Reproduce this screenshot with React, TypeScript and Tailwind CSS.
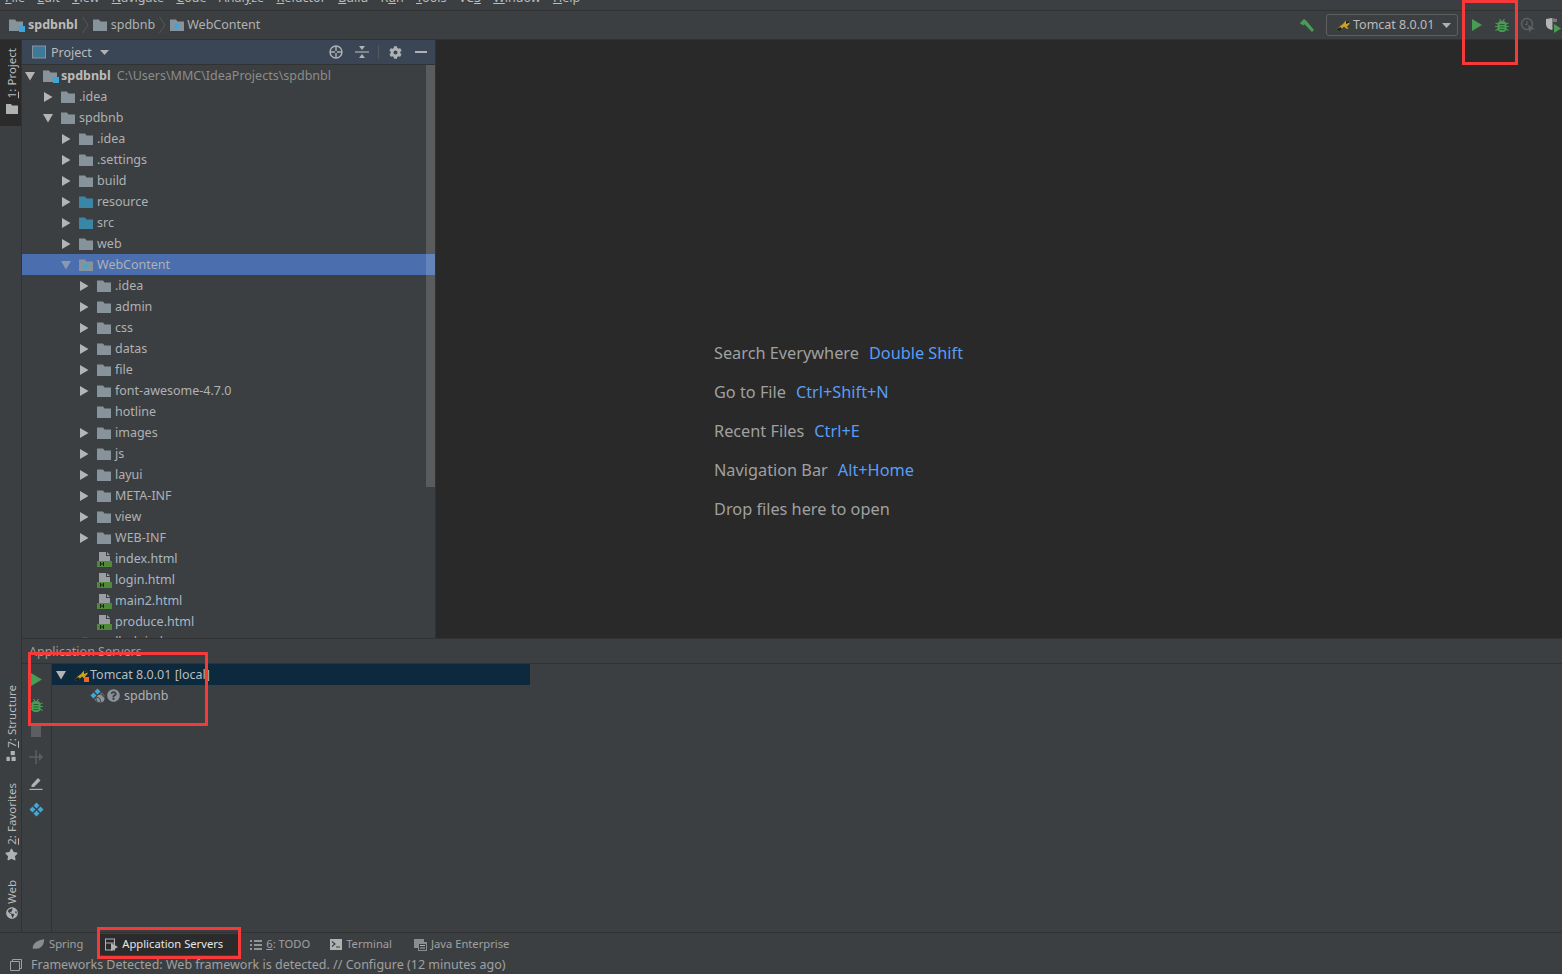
import React from "react";
import { FaCog, FaStar, FaGlobeAmericas, FaQuestionCircle } from "react-icons/fa";

const Folder = ({ color = "#87939a", dot = false, mod = false }: { color?: string; dot?: boolean; mod?: boolean }) => (
  <svg width="16" height="14" viewBox="0 0 16 14" className="shrink-0">
    <path d="M0 1.500h6l1.500 2H14v9.500H0z" fill={color} />
    {dot && <circle cx="6.500" cy="8.500" r="2.400" fill="#3aa7dc" />}
    {mod && <rect x="10" y="8" width="6" height="6" fill="#3aa7dc" />}
  </svg>
);

const Arrow = ({ open, className = "" }: { open?: boolean; className?: string }) => (
  <svg width="10" height="10" viewBox="0 0 10 10" className={className}>
    {open ? <polygon points="0,1 10,1 5,9.500" fill="#b4b4b4" /> : <polygon points="1,0 9.500,5 1,10" fill="#b4b4b4" />}
  </svg>
);

const Html = () => (
  <svg width="16" height="16" viewBox="0 0 16 16" className="shrink-0">
    <path d="M2 1h7v4h4v5H2z" fill="#9a9ea2" />
    <path d="M10 1l3 3h-3z" fill="#9a9ea2" />
    <rect x="0" y="10" width="15" height="6" fill="#4f8a3a" />
    <path d="M3.500 11v4M6.500 11v4M3.500 13h3" stroke="#16280f" strokeWidth="1" />
  </svg>
);

const Play = ({ size = 12, color = "#499c54" }: { size?: number; color?: string }) => (
  <svg width={size} height={size} viewBox="0 0 12 12"><polygon points="1,0 11,6 1,12" fill={color} /></svg>
);

const Bug = ({ color = "#499c54" }: { color?: string }) => (
  <svg width="14" height="14" viewBox="0 0 14 14">
    <path d="M4.500 1l1.500 2M9.500 1L8 3M0.500 5l2.500 1M13.500 5L11 6M0 8.500h3M14 8.500h-3M0.500 12.500L3 11M13.500 12.500L11 11" stroke={color} strokeWidth="1.200" />
    <rect x="2.500" y="3" width="9" height="11" rx="4" fill={color} />
    <path d="M4.500 6.500h5M4.500 9h5M4.500 11.500h5" stroke="#2f5a35" strokeWidth="1" />
  </svg>
);

const Tomcat = ({ badge = false }: { badge?: boolean }) => (
  <svg width="16" height="14" viewBox="0 0 16 14" className="shrink-0">
    <path d="M0.500 11.500c2-1 3.500-4 6-5L10 2.500l1 1 2-1 .5 3.500-2.500 2.500 1.500 2.500-2.500-.500L8 8.500 5 11.500 2 12.500z" fill="#c9a227" />
    <path d="M10 2.500l1 1 2-1 .3 2L10 6zM0.500 11.500L4.500 9 6 11 3 13z" fill="#1e1e1e" />
    {badge && <rect x="10" y="9" width="5" height="5" fill="#f26522" />}
  </svg>
);

const Deploy = ({ globe = false }: { globe?: boolean }) => (
  <svg width="15" height="15" viewBox="0 0 15 15" className="shrink-0">
    <path d="M7.500 0.500L10.500 3.500 7.500 6.500 4.500 3.500zM3.500 4.500L6.500 7.500 3.500 10.500 0.500 7.500zM11.500 4.500L14.500 7.500 11.500 10.500 8.500 7.500zM7.500 8.500L10.500 11.500 7.500 14.500 4.500 11.500z" fill="#40a9d9" />
    {globe && <circle cx="10.500" cy="10.500" r="4.500" fill="#8a9299" stroke="#3c3f41" />}
    {globe && <path d="M7 9.500c2 0 3 1 3 2s1 2 1 3M12 6.500c0 2 2 2 2.500 3" stroke="#3c3f41" fill="none" />}
  </svg>
);

type Node = { d: number; t: string; a?: "o" | "c"; k?: "f" | "b" | "w" | "h" | "m"; sel?: boolean; extra?: string };

const rows: Node[] = [
  { d: 0, t: "spdbnbl", a: "o", k: "m", extra: "C:\\Users\\MMC\\IdeaProjects\\spdbnbl" },
  { d: 1, t: ".idea", a: "c" },
  { d: 1, t: "spdbnb", a: "o" },
  { d: 2, t: ".idea", a: "c" },
  { d: 2, t: ".settings", a: "c" },
  { d: 2, t: "build", a: "c" },
  { d: 2, t: "resource", a: "c", k: "b" },
  { d: 2, t: "src", a: "c", k: "b" },
  { d: 2, t: "web", a: "c" },
  { d: 2, t: "WebContent", a: "o", k: "w", sel: true },
  { d: 3, t: ".idea", a: "c" },
  { d: 3, t: "admin", a: "c" },
  { d: 3, t: "css", a: "c" },
  { d: 3, t: "datas", a: "c" },
  { d: 3, t: "file", a: "c" },
  { d: 3, t: "font-awesome-4.7.0", a: "c" },
  { d: 3, t: "hotline" },
  { d: 3, t: "images", a: "c" },
  { d: 3, t: "js", a: "c" },
  { d: 3, t: "layui", a: "c" },
  { d: 3, t: "META-INF", a: "c" },
  { d: 3, t: "view", a: "c" },
  { d: 3, t: "WEB-INF", a: "c" },
  { d: 3, t: "index.html", k: "h" },
  { d: 3, t: "login.html", k: "h" },
  { d: 3, t: "main2.html", k: "h" },
  { d: 3, t: "produce.html", k: "h" },
];

const Row = ({ n }: { n: Node }) => (
  <div
    className={`h-[21px] flex items-center shrink-0 ${n.sel ? "bg-[#4b6eaf]" : ""}`}
    style={{ paddingLeft: 3 + n.d * 18 }}
  >
    <span className="w-[18px] shrink-0 flex justify-start">
      {n.a && <Arrow open={n.a === "o"} className={n.sel ? "opacity-60" : ""} />}
    </span>
    {n.k === "h" ? (
      <Html />
    ) : (
      <Folder color={n.k === "b" ? "#3a86a6" : "#87939a"} dot={n.k === "w"} mod={n.k === "m"} />
    )}
    <span
      className={`ml-[2px] pt-[2px] ${n.d === 0 ? "font-bold text-[#bbbbbb]" : ""} ${n.k === "h" ? "text-[#a9b7c6]" : n.k === "m" ? "" : "text-[#afb1b3]"} ${n.sel ? "text-[#a9b7c6]" : ""}`}
    >
      {n.t}
    </span>
    {n.extra && <span className="ml-[6px] pt-[2px] text-[#8c8c8c]">{n.extra}</span>}
  </div>
);

const Hint = ({ a, b }: { a: string; b?: string }) => (
  <div className="h-[39px] flex items-center gap-[10px] text-[16.300px] text-[#a0a0a0]">
    <span>{a}</span>
    {b && <span className="text-[#589df6]">{b}</span>}
  </div>
);

const VTab = ({ label, u, icon, active, className = "" }: { label: string; u: string; icon: React.ReactNode; active?: boolean; className?: string }) => (
  <div className={`w-[21px] pl-[2px] flex flex-col-reverse items-center text-[11.500px] text-[#bbbbbb] ${active ? "bg-[#2b2b2b] h-[86px] pb-[12px] gap-[6px]" : "gap-[3px]"} ${className}`}>
    {icon}
    <span className="[writing-mode:vertical-rl] rotate-180 leading-[19px] whitespace-nowrap">
      <span className="underline">{u}</span>
      {label}
    </span>
  </div>
);

const BottomTab = ({ icon, children, active, className = "px-[8px]" }: { icon: React.ReactNode; children: React.ReactNode; active?: boolean; className?: string }) => (
  <div className={`h-full flex items-center gap-[4px] text-[11.200px] ${active ? "bg-[#2b2b2b] text-[#e6e6e6]" : "text-[#a0a0a0]"} ${className}`}>
    {icon}
    <span>{children}</span>
  </div>
);

const menu: [string, string, string][] = [
  ["", "F", "ile"], ["", "E", "dit"], ["", "V", "iew"], ["", "N", "avigate"], ["", "C", "ode"], ["Anal", "y", "ze"],
  ["", "R", "efactor"], ["", "B", "uild"], ["R", "u", "n"], ["", "T", "ools"], ["VC", "S", ""], ["", "W", "indow"], ["", "H", "elp"],
];

const Chevron = () => (
  <svg width="7" height="18" viewBox="0 0 7 18" className="mx-[4px] shrink-0">
    <path d="M0.500 1l5.500 8-5.500 8" fill="none" stroke="#55585b" />
  </svg>
);

export default function App() {
  return (
    <div
      className="relative w-[1562px] h-[974px] overflow-hidden bg-[#3c3f41] text-[12.500px] text-[#bbbbbb] flex flex-col"
      style={{ fontFamily: '"Noto Sans", sans-serif' }}
    >
      {/* menu */}
      <div className="h-[11px] shrink-0 overflow-hidden border-b border-[#323232] flex items-end pb-[4px] pl-[5px] gap-[12.300px] text-[#bbbbbb]">
        {menu.map(([a, u, b]) => (
          <span key={a + u + b} className="leading-[16px] whitespace-nowrap">
            {a}
            <span className="underline">{u}</span>
            {b}
          </span>
        ))}
      </div>
      {/* nav */}
      <div className="h-[29px] shrink-0 border-b border-[#323232] flex items-center pl-[9px]">
        <Folder mod />
        <span className="ml-[3px] font-bold text-[#bbbbbb]">spdbnbl</span>
        <Chevron />
        <Folder />
        <span className="ml-[2px] text-[#afb1b3]">spdbnb</span>
        <Chevron />
        <Folder dot />
        <span className="ml-[1px] text-[#afb1b3]">WebContent</span>
        <div className="ml-auto flex items-center">
          <svg width="16" height="16" viewBox="0 0 16 16">
            <path d="M1 6l4-4 2 1.500 1 1L15 13l-2 2-7.500-7.800L4 8.500 3 7.500 1.700 7z" fill="#499c54" />
          </svg>
          <div className="ml-[11px] w-[132px] h-[22px] rounded-[3px] border border-[#5e6060] flex items-center pl-[9px] pr-[6px] text-[#bbbbbb]">
            <Tomcat />
            <span className="ml-[1px]">Tomcat 8.0.01</span>
            <svg width="9" height="5" viewBox="0 0 9 5" className="ml-auto"><polygon points="0,0 9,0 4.500,5" fill="#afb1b3" /></svg>
          </div>
          <div className="ml-[13px]"><Play /></div>
          <div className="ml-[12px]"><Bug /></div>
          <svg width="16" height="16" viewBox="0 0 16 16" className="ml-[11px]">
            <circle cx="7" cy="7" r="5.500" fill="none" stroke="#5e6163" strokeWidth="1.400" />
            <path d="M7 4v3.500h-2" fill="none" stroke="#5e6163" strokeWidth="1.200" />
            <polygon points="8,8 15,12 11,13 9.500,16" fill="#5e6163" />
          </svg>
          <svg width="16" height="16" viewBox="0 0 16 16" className="ml-[9px] mr-[1px]">
            <path d="M1 2l6-1v12l-3-1C2 11 1 9 1 7z" fill="#b5b5b5" />
            <path d="M7 1l5 1v3H8v7.500L7 13z" fill="#777" />
            <polygon points="9,7 16,11.500 9,16" fill="#499c54" />
          </svg>
        </div>
      </div>

      <div className="flex-1 min-h-0 flex">
        {/* left stripe */}
        <div className="w-[22px] shrink-0 border-r border-[#323232] flex flex-col">
          <VTab
            active
            u="1"
            label=": Project"
            icon={<svg width="12" height="10" viewBox="0 0 12 10" className="shrink-0"><path d="M0 0h5l1 1.500h6V10H0z" fill="#afb1b3" /></svg>}
          />
          <VTab
            className="mt-[559px]"
            u="7"
            label=": Structure"
            icon={<svg width="11" height="10" viewBox="0 0 12 12" className="shrink-0"><rect x="5" y="0" width="5" height="5" fill="#afb1b3" /><rect x="0" y="7" width="4" height="5" fill="#afb1b3" /><rect x="6" y="7" width="5" height="5" fill="#afb1b3" /></svg>}
          />
          <VTab
            className="mt-[22px]"
            u="2"
            label=": Favorites"
            icon={<FaStar size={13} color="#afb1b3" className="shrink-0" />}
          />
          <VTab
            className="mt-[19px]"
            u=""
            label="Web"
            icon={<FaGlobeAmericas size={12} color="#afb1b3" className="shrink-0" />}
          />
        </div>

        <div className="flex-1 min-w-0 flex flex-col">
          <div className="h-[599px] shrink-0 flex border-b border-[#323232]">
            {/* project */}
            <div className="w-[414px] shrink-0 flex flex-col border-r border-[#323232]">
              <div className="h-[25px] shrink-0 bg-[#3a4656] border-b border-[#323232] flex items-center pl-[10px] pr-[8px]">
                <svg width="14" height="14" viewBox="0 0 14 14"><rect x="0.500" y="1" width="13" height="12" fill="#3d7a9a" stroke="#8a9299" /></svg>
                <span className="ml-[5px] pt-[2px] text-[#bbbbbb]">Project</span>
                <svg width="9" height="5" viewBox="0 0 9 5" className="ml-[8px]"><polygon points="0,0 9,0 4.500,5" fill="#afb1b3" /></svg>
                <svg width="14" height="14" viewBox="0 0 14 14" className="ml-auto">
                  <circle cx="7" cy="7" r="6" fill="none" stroke="#afb1b3" strokeWidth="1.400" />
                  <path d="M7 1v5M7 8v5M1 7h5M8 7h5" stroke="#afb1b3" strokeWidth="1.400" />
                </svg>
                <svg width="14" height="14" viewBox="0 0 14 14" className="ml-[12px]">
                  <path d="M0 7h14" stroke="#afb1b3" strokeWidth="1.200" />
                  <polygon points="4,1 10,1 7,5" fill="#afb1b3" />
                  <polygon points="4,13 10,13 7,9" fill="#afb1b3" />
                </svg>
                <div className="ml-[9px] w-px h-[14px] bg-[#55595c]" />
                <FaCog size={13} color="#afb1b3" className="ml-[10px]" />
                <div className="ml-[13px] w-[12px] h-[2px] bg-[#afb1b3]" />
              </div>
              <div className="relative flex-1 min-h-0 overflow-hidden flex flex-col">
                {rows.map((n, i) => (
                  <Row key={i} n={n} />
                ))}
                <div className="h-[21px] flex items-center shrink-0 pl-[57px]">
                  <span className="w-[12px] h-[12px] rounded-full bg-[#5c4a7a] shrink-0" />
                  <span className="ml-[6px] text-[#afb1b3]">spdbnb.iml</span>
                </div>
                <div className="absolute top-0 right-0 w-[9px] h-[422px] bg-white/15" />
              </div>
            </div>
            {/* editor */}
            <div className="flex-1 bg-[#292929] pt-[294px] pl-[278px]">
              <Hint a="Search Everywhere" b="Double Shift" />
              <Hint a="Go to File" b="Ctrl+Shift+N" />
              <Hint a="Recent Files" b="Ctrl+E" />
              <Hint a="Navigation Bar" b="Alt+Home" />
              <Hint a="Drop files here to open" />
            </div>
          </div>

          {/* app servers */}
          <div className="flex-1 min-h-0 flex flex-col">
            <div className="h-[25px] shrink-0 border-b border-[#323232] flex items-center pt-[2px] pl-[7px] text-[#9a9da0]">
              Application Servers
            </div>
            <div className="flex-1 min-h-0 flex">
              <div className="w-[30px] shrink-0 border-r border-[#323232] flex flex-col pt-[2px] pr-[1px] [&>div]:h-[26px] [&>div]:flex [&>div]:items-center [&>div]:justify-center">
                <div><Play size={13} /></div>
                <div><Bug /></div>
                <div><span className="block w-[10px] h-[11px] bg-[#5c5e60]" /></div>
                <div><svg width="14" height="14" viewBox="0 0 14 14"><path d="M7 0v14M0 7h10" stroke="#5c5e60" strokeWidth="1.500" /><polygon points="10,3 14,7 10,11" fill="#5c5e60" /></svg></div>
                <div><svg width="14" height="14" viewBox="0 0 14 14"><path d="M0.500 13.500h13" stroke="#afb1b3" strokeWidth="1.400" /><path d="M2.500 9L9 2l2.500 2.500L5 11H2.500z" fill="#afb1b3" /></svg></div>
                <div><Deploy /></div>
              </div>
              <div className="flex-1 min-w-0">
                <div className="w-[478px] h-[21px] bg-[#0d293e] flex items-center pl-[2px] text-[#bbbbbb]">
                  <span className="w-[14px] flex justify-center shrink-0"><Arrow open /></span>
                  <span className="ml-[6px]"><Tomcat badge /></span>
                  <span className="pt-[2px]">Tomcat 8.0.01 [local]</span>
                </div>
                <div className="h-[21px] flex items-center pl-[38px]">
                  <Deploy globe />
                  <FaQuestionCircle size={13} color="#8a9299" className="ml-[2px]" />
                  <span className="ml-[4px] pt-[2px] text-[#afb1b3]">spdbnb</span>
                </div>
              </div>
            </div>
          </div>
        </div>
      </div>

      {/* tabs */}
      <div className="h-[23px] shrink-0 border-t border-[#323232] flex items-center pt-[1px] pl-[24px]">
        <BottomTab icon={<svg width="13" height="11" viewBox="0 0 15 12"><path d="M1 11C0 6 5 1 14 0c0 7-4 11-9 11-2 0-3 0-4 0z" fill="#8a8d90" /></svg>}>Spring</BottomTab>
        <div className="w-[9px]" />
        <BottomTab active className="pl-[5px] pr-[15px]" icon={<svg width="13" height="13" viewBox="0 0 13 13"><rect x="0.500" y="1" width="9" height="11" fill="none" stroke="#afb1b3" /><path d="M0 5h9" stroke="#afb1b3" /><polygon points="6,5 13,9 6,13" fill="#afb1b3" /></svg>}>Application Servers</BottomTab>
        <div className="w-[4px]" />
        <BottomTab icon={<svg width="12" height="10" viewBox="0 0 12 10"><path d="M0 1h2M4 1h8M0 5h2M4 5h8M0 9h2M4 9h8" stroke="#afb1b3" strokeWidth="1.600" /></svg>}><span className="underline">6</span>: TODO</BottomTab>
        <div className="w-[4px]" />
        <BottomTab icon={<svg width="12" height="11" viewBox="0 0 12 11"><rect width="12" height="11" fill="#afb1b3" /><path d="M2 2.500L5 5 2 7.500" stroke="#3c3f41" strokeWidth="1.200" fill="none" /><path d="M6 8h4" stroke="#3c3f41" /></svg>}>Terminal</BottomTab>
        <div className="w-[6px]" />
        <BottomTab className="pl-[8px] pr-[8px] gap-[3px]" icon={<svg width="13" height="12" viewBox="0 0 13 12"><path d="M0 0h10v3H13v9H4V9H0z" fill="#8a8d90" /><rect x="5" y="5" width="7" height="6" fill="#3c3f41" /><path d="M6 6.500h5M6 9h5" stroke="#afb1b3" /></svg>}>Java Enterprise</BottomTab>
      </div>
      {/* status */}
      <div className="h-[19px] shrink-0 flex items-center pt-[1px] pl-[10px] text-[#a0a0a0]">
        <svg width="12" height="12" viewBox="0 0 12 12"><path d="M0.500 2.500h9v9h-9zM2.500 2.500v-2h9v9h-2" fill="none" stroke="#a0a0a0" /></svg>
        <span className="ml-[9px]">Frameworks Detected: Web framework is detected. // Configure (12 minutes ago)</span>
      </div>

      {/* annotations */}
      <div className="absolute left-[1462px] top-0 w-[56px] h-[65px] border-[3px] border-[#f63a3a]" />
      <div className="absolute left-[28px] top-[652px] w-[180px] h-[74px] border-[3px] border-[#f63a3a]" />
      <div className="absolute left-[97px] top-[927px] w-[144px] h-[32px] border-[3px] border-[#f63a3a]" />
    </div>
  );
}
